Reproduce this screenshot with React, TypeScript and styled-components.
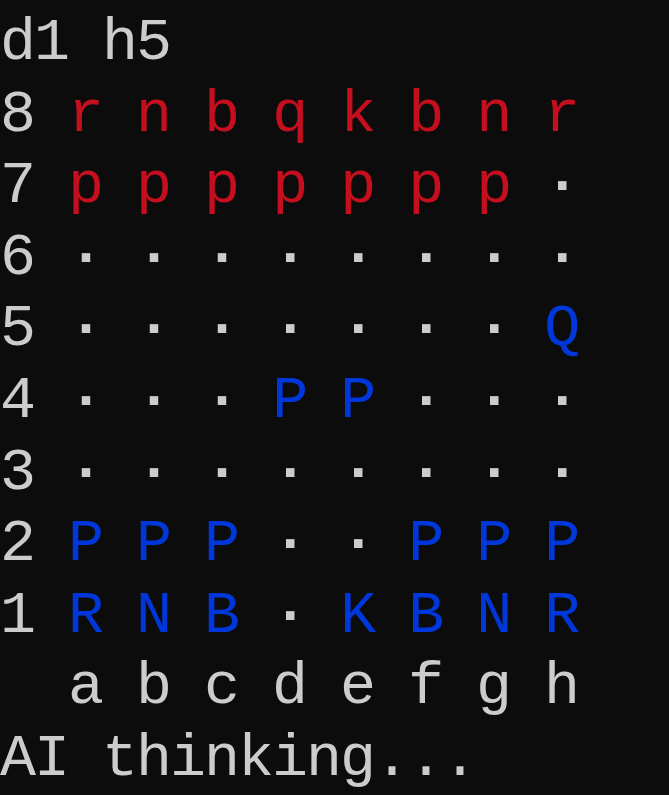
import React from "react";
import styled, { createGlobalStyle } from "styled-components";

const Global = createGlobalStyle`
  html, body { margin: 0; padding: 0; background: #0c0c0c; }
`;

const Terminal = styled.div`
  width: 669px;
  height: 795px;
  box-sizing: border-box;
  padding-top: 8px;
  background: #0c0c0c;
  color: #cccccc;
  font-family: "Liberation Mono", "DejaVu Sans Mono", monospace;
  font-size: 60px;
  letter-spacing: -2px;
  line-height: 71.6px;
  white-space: pre;
  overflow: hidden;
`;

const Line = styled.div`
  height: 71.6px;
`;

const Cell = styled.span<{ $tone: "w" | "b" | "n" }>`
  color: ${(p) => (p.$tone === "b" ? "#c50f1f" : p.$tone === "w" ? "#0037da" : "#cccccc")};
  font-weight: ${(p) => (p.$tone === "n" ? 700 : 400)};
`;

const board = [
  "rnbqkbnr",
  "ppppppp.",
  "........",
  ".......Q",
  "...PP...",
  "........",
  "PPP..PPP",
  "RNB.KBNR",
];

export default function App() {
  return (
    <>
      <Global />
      <Terminal>
        <Line>d1 h5</Line>
        {board.map((row, i) => (
          <Line key={i}>
            {8 - i}
            {row.split("").map((c, j) => {
              const tone = c === "." ? "n" : c === c.toUpperCase() ? "w" : "b";
              return (
                <React.Fragment key={j}>
                  {" "}
                  <Cell $tone={tone}>{c === "." ? "·" : c}</Cell>
                </React.Fragment>
              );
            })}
          </Line>
        ))}
        <Line>  a b c d e f g h</Line>
        <Line>AI thinking...</Line>
      </Terminal>
    </>
  );
}
